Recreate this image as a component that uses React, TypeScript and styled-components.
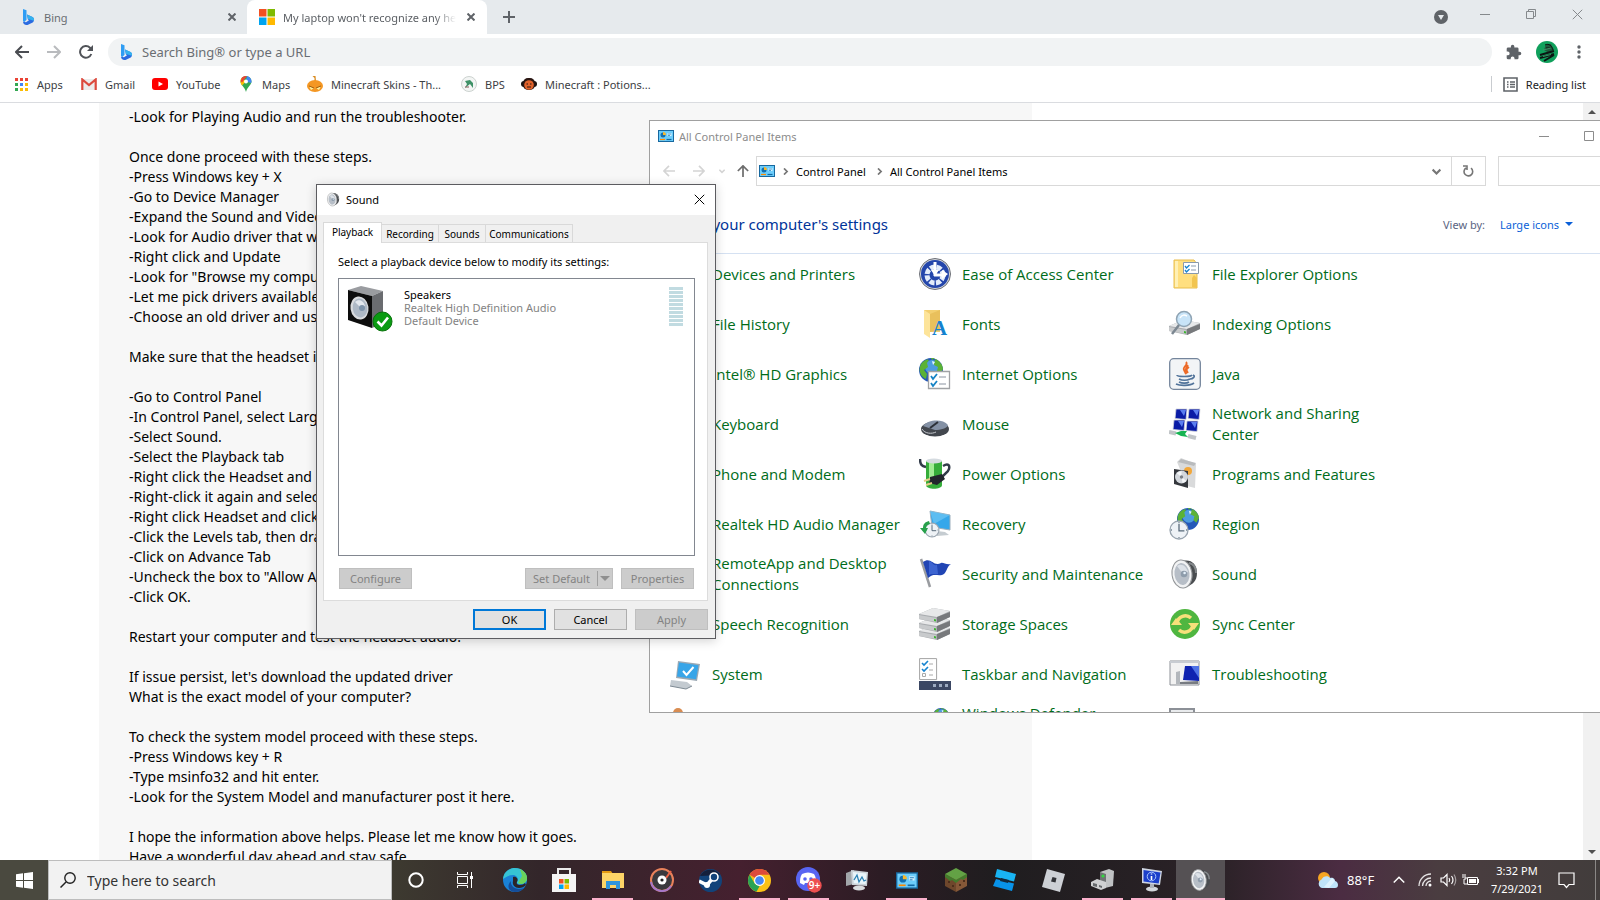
import React from "react";
import styled, { createGlobalStyle, css } from "styled-components";

const Global = createGlobalStyle`
  * { box-sizing: border-box; }
  body { margin: 0; overflow: hidden; font-family: "Noto Sans", "Open Sans", sans-serif; font-size: 11px; color: #000; }
  button, input, select { font: inherit; color: inherit; margin: 0; padding: 0; border: 0; background: none; border-radius: 0; outline: none; }
  a { color: inherit; text-decoration: none; }
  svg { display: block; flex: none; }
  ul { list-style: none; margin: 0; padding: 0; }
`;

/* ---------- Desktop and browser frame ---------- */

const Desktop = styled.div`
  position: relative;
  display: flex;
  flex-direction: column;
  height: 100vh;
  overflow: hidden;
  background: #fff;
`;

const Browser = styled.main`
  flex: 1;
  min-height: 0;
  display: flex;
  flex-direction: column;
`;

const TabStrip = styled.header`
  display: flex;
  flex: none;
  align-items: stretch;
  height: 34px;
  background: #e6eaed;
`;

const BrowserTab = styled.div<{ $active?: boolean }>`
  display: flex;
  align-items: center;
  width: ${(p) => (p.$active ? 240 : 247)}px;
  padding: 0 9px 0 ${(p) => (p.$active ? 12 : 21)}px;
  gap: ${(p) => (p.$active ? 8 : 9)}px;
  color: ${(p) => (p.$active ? "#5b5f64" : "#696d72")};
  ${(p) => p.$active && css`background: #fff; border-radius: 8px 8px 0 0;`}
`;

const TabTitle = styled.span<{ $fade?: boolean }>`
  flex: 1;
  white-space: nowrap;
  overflow: hidden;
  ${(p) => p.$fade && css`mask-image: linear-gradient(90deg, #000 88%, transparent 100%);`}
`;

const IconButton = styled.button<{ $w?: number; $h?: number }>`
  display: flex;
  align-items: center;
  justify-content: center;
  flex: none;
  width: ${(p) => p.$w ?? 16}px;
  height: ${(p) => p.$h ?? 16}px;
`;

const CaptionButtons = styled.div`
  display: flex;
  margin-left: auto;
`;

const Toolbar = styled.nav`
  display: flex;
  flex: none;
  align-items: center;
  height: 36px;
  padding: 0 5px 0 6px;
`;

const NavButtons = styled.div`
  display: flex;
  width: 102px;
`;

const Omnibox = styled.label`
  flex: 1;
  display: flex;
  align-items: center;
  gap: 9px;
  height: 28px;
  padding: 0 11px;
  border-radius: 14px;
  background: #f1f3f4;
`;

const OmniInput = styled.input`
  flex: 1;
  font-size: 13px;
  &::placeholder { color: #6a6e73; opacity: 1; }
`;

const ToolbarEnd = styled.div`
  display: flex;
  align-items: center;
  padding-left: 5px;
`;

const Bookmarks = styled.nav`
  display: flex;
  flex: none;
  align-items: center;
  height: 33px;
  padding: 0 14px 4px 14px;
  border-bottom: 1px solid #dadce0;
  color: #3c4043;
`;

const Bookmark = styled.a<{ $w?: number }>`
  display: flex;
  align-items: center;
  gap: 8px;
  width: ${(p) => (p.$w ? `${p.$w}px` : "auto")};
  white-space: nowrap;
`;

const ReadingList = styled.button`
  display: flex;
  align-items: center;
  gap: 8px;
  height: 16px;
  margin-left: auto;
  padding-left: 11px;
  border-left: 1px solid #c9ccd0;
  color: #202124;
`;

const Viewport = styled.div`
  flex: 1;
  min-height: 0;
  display: flex;
  overflow: hidden;
`;

const PageArea = styled.div`
  flex: 1;
  min-height: 0;
  overflow: hidden;
`;

const Article = styled.article`
  width: min(933px, 100%);
  margin-left: 99px;
  padding: 4px 30px;
  background: #f7f7f7;
  font-size: 14px;
  line-height: 20px;
`;

const Line = styled.p`
  margin: 0;
  min-height: 20px;
  white-space: nowrap;
`;

const ScrollTrack = styled.div`
  display: flex;
  flex-direction: column;
  justify-content: space-between;
  width: 17px;
  background: #f1f1f1;
`;

/* ---------- Control panel window ---------- */

const ControlWindow = styled.section`
  position: absolute;
  left: 649px;
  right: 0;
  top: 120px;
  height: 593px;
  overflow: hidden;
  display: flex;
  flex-direction: column;
  background: #fff;
  border: 1px solid #a0a0a0;
  border-right: 0;
`;

const ControlTitle = styled.header`
  display: flex;
  flex: none;
  align-items: center;
  gap: 5px;
  height: 30px;
  padding: 0 0 0 8px;
  color: #8c8c8c;
`;

const ControlCaption = styled.div`
  display: flex;
  margin-left: auto;
  width: 79px;
  gap: 17px;
`;

const AddressRow = styled.div`
  display: flex;
  flex: none;
  align-items: center;
  height: 40px;
`;

const HistoryButtons = styled.div`
  display: flex;
  width: 106px;
  padding-left: 4px;
`;

const AddressBox = styled.div`
  flex: 1;
  display: flex;
  align-items: center;
  height: 30px;
  margin-right: 12px;
  border: 1px solid #d9d9d9;
`;

const Crumbs = styled.div`
  flex: 1;
  display: flex;
  align-items: center;
  padding-left: 2px;
`;

const Crumb = styled.a<{ $w?: number }>`
  width: ${(p) => (p.$w ? `${p.$w}px` : "auto")};
  white-space: nowrap;
`;

const RefreshCell = styled.div`
  display: flex;
  align-items: center;
  height: 28px;
  border-left: 1px solid #d9d9d9;
`;

const WindowSearch = styled.input`
  width: 102px;
  height: 30px;
  border: 1px solid #d9d9d9;
  border-right: 0;
`;

const HeadingRow = styled.div`
  display: flex;
  flex: none;
  align-items: center;
  justify-content: space-between;
  height: 63px;
  padding: 4px 27px 0 14px;
  border-bottom: 1px solid #d5e1f2;
`;

const Heading = styled.h1`
  margin: 0;
  font-size: 15px;
  font-weight: 400;
  color: #003399;
`;

const ViewBy = styled.label`
  display: flex;
  align-items: center;
  color: #5a6482;
`;

const ViewSelect = styled.select`
  appearance: none;
  width: 65px;
  margin-left: 15px;
  color: #0a5fd8;
`;

const ItemGrid = styled.ul`
  display: grid;
  flex: none;
  grid-template-columns: repeat(3, 250px);
  grid-auto-rows: 50px;
  padding-left: 19px;
  margin-top: -5px;
`;

const ItemCell = styled.li`
  display: flex;
  align-items: center;
`;

const ItemLink = styled.a`
  display: flex;
  align-items: center;
  gap: 11px;
  color: #006c1a;
  font-family: "Open Sans", sans-serif;
  font-size: 15px;
  line-height: 21px;
`;

const ItemLabel = styled.span`
  max-width: 190px;
`;

/* ---------- Sound dialog ---------- */

const Dialog = styled.section`
  position: absolute;
  left: 316px;
  top: 184px;
  width: 400px;
  border: 1px solid #5c5c60;
  background: #f0f0f0;
  box-shadow: 0 2px 10px rgba(0, 0, 0, 0.18);
`;

const DialogTitle = styled.header`
  display: flex;
  align-items: center;
  height: 30px;
  padding: 0 8px 2px 9px;
  gap: 5px;
  background: #fff;
`;

const DialogName = styled.span`
  flex: 1;
`;

const DialogBody = styled.div`
  padding: 7px 7px 8px 6px;
`;

const TabList = styled.div`
  display: flex;
  align-items: flex-end;
  height: 20px;
`;

const DialogTab = styled.button<{ $w: number; $active?: boolean }>`
  width: ${(p) => p.$w}px;
  height: 18px;
  border: 1px solid #d9d9d9;
  border-left-width: 0;
  border-bottom: 0;
  font-size: 10px;
  line-height: 16px;
  white-space: nowrap;
  ${(p) => p.$active && css`
    height: 21px;
    margin-bottom: -1px;
    padding-bottom: 2px;
    border-left-width: 1px;
    background: #fff;
    position: relative;
  `}
`;

const TabPanel = styled.div`
  border: 1px solid #dcdcdc;
  background: #fff;
  height: 359px;
  padding: 11px 12px 11px 14px;
  display: flex;
  flex-direction: column;
`;

const Prompt = styled.p`
  margin: 0;
  line-height: 16px;
`;

const DeviceList = styled.ul`
  flex: 1;
  margin: 8px 0 12px;
  border: 1px solid #828790;
`;

const Device = styled.li`
  display: flex;
  align-items: flex-start;
  padding: 7px 11px 0 9px;
`;

const DeviceText = styled.div`
  flex: 1;
  padding: 2px 0 0 10px;
  line-height: 13px;
  color: #838383;
`;

const DeviceName = styled.div`
  color: #000;
`;

const Meter = styled.div`
  display: grid;
  gap: 1px;
  padding-top: 1px;
`;

const MeterBar = styled.span`
  width: 14px;
  height: 3px;
  background: #c1dbe1;
`;

const ButtonRow = styled.div`
  display: flex;
  gap: 8px;
  justify-content: flex-end;
  padding: 0 1px;
`;

const PushButton = styled.button<{ $primary?: boolean; $start?: boolean }>`
  width: 73px;
  height: 21px;
  border: ${(p) => (p.$primary ? "2px solid #0078d7" : "1px solid #adadad")};
  background: #e1e1e1;
  line-height: 16px;
  ${(p) => p.$start && css`margin-right: auto;`}
  &:disabled { background: #cccccc; border-color: #bfbfbf; color: #838383; }
`;

const SplitButton = styled.button`
  display: flex;
  align-items: center;
  width: 88px;
  height: 21px;
  border: 1px solid #bfbfbf;
  background: #cccccc;
  color: #838383;
`;

const SplitLabel = styled.span`
  flex: 1;
  line-height: 15px;
  border-right: 1px solid #a0a0a0;
`;

const DialogFooter = styled.div`
  padding-top: 8px;
  margin-right: -1px;
`;

/* ---------- Taskbar ---------- */

const Taskbar = styled.footer`
  display: flex;
  flex: none;
  height: 40px;
  background: linear-gradient(90deg, #3d3a30 392px, #33262a 540px, #45202f 740px, #2c1c24 880px, #1f1d1f 1000px, #2b2227 1220px, #4b2c42 1340px, #4a3d40 1440px, #423d3c 100%);
  color: #fff;
`;

const StartButton = styled.button`
  width: 48px;
  display: flex;
  align-items: center;
  justify-content: center;
  background: #4a493f;
`;

const SearchBox = styled.label`
  display: flex;
  align-items: center;
  gap: 11px;
  width: 344px;
  padding-left: 11px;
  background: #f2f2f2;
  border: 1px solid #bdbdbd;
`;

const SearchInput = styled.input`
  flex: 1;
  font-size: 14px;
  &::placeholder { color: #333; opacity: 1; }
`;

const TaskButton = styled.button<{ $w?: number; $open?: boolean; $current?: boolean }>`
  display: flex;
  align-items: center;
  justify-content: center;
  position: relative;
  width: ${(p) => p.$w ?? 49}px;
  background: ${(p) => (p.$current ? "#555154" : "transparent")};
  ${(p) => p.$open && css`
    &::after {
      content: "";
      position: absolute;
      left: ${p.$current ? 0 : 4}px;
      right: ${p.$current ? 0 : 4}px;
      bottom: 0;
      height: 2px;
      background: #fab0cb;
    }
  `}
`;

const Tray = styled.div`
  display: flex;
  align-items: center;
  margin-left: auto;
  padding-right: 4px;
`;

const Weather = styled.button`
  display: flex;
  align-items: center;
  gap: 9px;
  width: 67px;
  font-size: 13px;
`;

const Clock = styled.div`
  width: 68px;
  text-align: center;
  line-height: 18px;
`;

const ShowDesktop = styled.div`
  width: 1px;
  height: 40px;
  margin-left: 14px;
  background: #8b8886;
`;

/* ---------- Icons ---------- */

const Bing = () => (
  <svg width="14" height="16" viewBox="0 0 14 16">
    <path d="M2 0l3.500 1.300v9.500L3.500 13 2 12z" fill="#2f9df4" />
    <path d="M6 5.500l5.500 2.500c2 1.200 2 4 .2 5.600L6.500 16C4 16.200 2 15 2 12.500l3 .8 3-2-1.200-1z" fill="#2b6be0" />
    <path d="M6 5.500l5.500 2.500c1.600 1 1.800 2.500 1.400 3.800L7 10z" fill="#36b2ee" />
  </svg>
);

const MsLogo = () => (
  <svg width="16" height="16" viewBox="0 0 16 16">
    <path fill="#f25022" d="M0 0h7.500v7.500H0z" /><path fill="#7fba00" d="M8.500 0H16v7.500H8.500z" />
    <path fill="#00a4ef" d="M0 8.500h7.500V16H0z" /><path fill="#ffb900" d="M8.500 8.500H16V16H8.500z" />
  </svg>
);

const Cross = ({ s = 8, c = "#5f6368", w = 2 }: { s?: number; c?: string; w?: number }) => (
  <svg width={s} height={s} viewBox="0 0 10 10"><path d="M.7.700l8.600 8.600M9.300.700L.700 9.300" stroke={c} strokeWidth={w * 10 / s} /></svg>
);

const Plus = () => <svg width="12" height="12"><path d="M6 0v12M0 6h12" stroke="#5f6368" strokeWidth="2" /></svg>;
const Minimize = ({ c = "#85898c" }) => <svg width="10" height="10"><path d="M0 5.500h10" stroke={c} /></svg>;
const Maximize = () => <svg width="10" height="10"><path d="M.5.500h9v9h-9z" fill="none" stroke="#8c8c8c" /></svg>;
const Restore = () => <svg width="10" height="10"><path d="M.5 2.500h7v7h-7zM2.500 2.500v-2h7v7h-2" fill="none" stroke="#85898c" /></svg>;
const MediaChevron = () => <svg width="14" height="14"><circle cx="7" cy="7" r="7" fill="#5f6368" /><path d="M4 5h6L7 10z" fill="#e6eaed" /></svg>;

const Arrow = ({ dir = 0, c = "#4a4d52", s = 14, w = 2 }) => (
  <svg width={s} height={s} viewBox="0 0 14 14"><path transform={`rotate(${dir} 7 7)`} d="M14 7H1.500M7 1L1 7l6 6" fill="none" stroke={c} strokeWidth={w} /></svg>
);
const Chevron = ({ dir = 0, c = "#767676", s = 8, w = 2 }) => (
  <svg width={s} height={s} viewBox="0 0 8 8"><path transform={`rotate(${dir} 4 4)`} d="M.5 2.300L4 5.800l3.500-3.500" fill="none" stroke={c} strokeWidth={w} /></svg>
);
const Triangle = ({ up = false, c = "#505050", s = 8 }) => (
  <svg width={s} height={s / 2} viewBox="0 0 8 4"><path d={up ? "M0 4L4 0l4 4z" : "M0 0h8L4 4z"} fill={c} /></svg>
);
const Reload = () => (
  <svg width="14" height="14" viewBox="0 0 14 14"><path d="M12.300 9A5.800 5.800 0 1 1 11 2.800L12.500 4.500" fill="none" stroke="#505358" strokeWidth="2" /><path d="M14 0v6H8z" fill="#505358" /></svg>
);
const SmallRefresh = () => (
  <svg width="11" height="12" viewBox="0 0 11 12"><path d="M8 3.200A4.300 4.300 0 1 1 3 3M0 1h4v4" fill="none" stroke="#767676" strokeWidth="1.600" /></svg>
);
const Puzzle = () => (
  <svg width="16" height="16" viewBox="1 0 23 23" fill="#5f6368"><path d="M20.500 11H19V7a2 2 0 0 0-2-2h-4V3.500a2.500 2.500 0 0 0-5 0V5H4a2 2 0 0 0-2 2v3.800h1.500a2.700 2.700 0 0 1 0 5.400H2V20a2 2 0 0 0 2 2h3.800v-1.500a2.700 2.700 0 0 1 5.400 0V22H17a2 2 0 0 0 2-2v-4h1.500a2.500 2.500 0 0 0 0-5z" /></svg>
);
const Avatar = () => (
  <svg width="22" height="22" viewBox="0 0 22 22">
    <circle cx="11" cy="11" r="11" fill="#10a05c" /><path d="M8 9L10 3l5 0 3 6-5 3z" fill="#1c5a3c" />
    <path d="M4 14l14-4M4 17l14-4M8 20l10-6" stroke="#0b1512" strokeWidth="2" /><path d="M9 4c4-2 7 1 8 5M10 7l5 0" stroke="#0b1512" fill="none" /><path d="M7 9l8-2M7 15.500l8-2" stroke="#3f8d66" />
  </svg>
);
const Dots = () => <svg width="4" height="14"><g fill="#5f6368"><circle cx="2" cy="2" r="1.700" /><circle cx="2" cy="7" r="1.700" /><circle cx="2" cy="12" r="1.700" /></g></svg>;

const AppsGrid = () => {
  const cs = ["#ea4335", "#ea4335", "#ea4335", "#34a853", "#4285f4", "#fbbc04", "#34a853", "#fbbc04", "#fbbc04"];
  return <svg width="15" height="15">{cs.map((c, i) => <rect key={i} x={1 + (i % 3) * 5} y={1 + Math.floor(i / 3) * 5} width="3" height="3" fill={c} />)}</svg>;
};
const Gmail = () => <svg width="16" height="12" viewBox="0 0 16 12"><path d="M1 1h14v11H1z" fill="#ececec" /><path d="M1.300 12V1.500L8 7l6.700-5.500V12" fill="none" stroke="#dc4a3e" strokeWidth="2.200" /></svg>;
const YouTube = () => <svg width="16" height="12"><rect width="16" height="12" rx="3" fill="#f00" /><path d="M6.500 3.500v5L11 6z" fill="#fff" /></svg>;
const Pin = () => (
  <svg width="16" height="16" viewBox="0 0 16 16"><path d="M8 0a5.500 5.500 0 0 1 5.500 5.500C13.500 9 9.500 10.500 8 16 6.500 10.500 2.500 9 2.500 5.500A5.500 5.500 0 0 1 8 0z" fill="#34a853" /><path d="M2.500 5.500A5.500 5.500 0 0 1 4 1.600L8 5.500 4 9.500C3 8.300 2.500 7 2.500 5.500z" fill="#fbbc04" /><path d="M4 1.600A5.500 5.500 0 0 1 9 .100L4 6.500 2.600 5z" fill="#ea4335" /><path d="M9 .100c2.500.5 4.500 2.700 4.500 5.400l-.3 1.500L8 5.500z" fill="#4285f4" /><circle cx="8" cy="5.500" r="2" fill="#fff" /></svg>
);
const Pumpkin = () => (
  <svg width="16" height="16" viewBox="0 0 16 16"><path d="M5.500 0h3l.5 5H7.500V2z" fill="#d98a1e" /><ellipse cx="8" cy="10" rx="8" ry="6" fill="#f49723" /><path d="M2 10l5 2-3 2zM14 10l-5 2 3 2z" fill="#fff3a0" /><path d="M2 10l5 2M14 10l-5 2" stroke="#a05a08" /></svg>
);
const Bps = () => <svg width="16" height="16"><circle cx="8" cy="8" r="7.500" fill="#f3f5f4" stroke="#ccd2cf" /><path d="M4 5l5-1 3 3v5l-3-4-5 4 2-4z" fill="#3e9167" /><path d="M4 11h4" stroke="#8a5a5a" /></svg>;
const Potion = () => <svg width="16" height="14"><rect y="4" width="16" height="6" rx="3" fill="#1b1412" /><rect x="2" y="1" width="12" height="12" rx="5" fill="#2a1612" /><circle cx="8" cy="8" r="4.800" fill="#e2632b" /><path d="M5.500 7h1.500M9 7h1.500M6 10h4" stroke="#2b1612" /></svg>;
const ListIcon = () => <svg width="15" height="15"><path d="M1 1h13v13H1z" fill="none" stroke="#5f6368" strokeWidth="1.600" /><path d="M4 5h1.500M7 5h5M4 7.500h1.500M7 7.500h5M4 10h1.500M7 10h5" stroke="#5f6368" strokeWidth="1.400" /></svg>;

const PanelIcon = ({ w = 16, h = 12 }) => (
  <svg width={w} height={h} viewBox="0 0 16 12"><rect width="16" height="12" fill="#17689f" /><rect x="1" y="1" width="14" height="10" fill="#6ccdfb" /><circle cx="5" cy="5" r="2.500" fill="#136fae" /><path d="M5 5V2a3 3 0 0 1 3 3z" fill="#f6b62b" /><path d="M9.500 3h4v3h-4z" fill="#d9f2ff" /><path d="M10 4h3M10 5.500h2" stroke="#1677b8" strokeWidth=".7" /><path d="M2 9.500h5" stroke="#ff8a00" strokeWidth="1.200" /><path d="M8.500 9.500h5" stroke="#126aa5" strokeWidth="1.200" /></svg>
);

const Cone = ({ s = 32 }) => (
  <svg width={s} height={s} viewBox="0 0 32 32">
    <path d="M14 3c8-2 14 3 14 12s-5 11-10 14z" fill="#4a4d50" /><path d="M20 5c5 1 7 5 7 10" stroke="#85898c" strokeWidth="2" fill="none" />
    <ellipse cx="13" cy="16" rx="10" ry="14" transform="rotate(-7 13 16)" fill="#f2f3f4" stroke="#94979a" />
    <ellipse cx="13" cy="16" rx="7.500" ry="11" transform="rotate(-7 13 16)" fill="#b7bec7" /><path d="M8 8c5-3 9 0 11 6l-5 2z" fill="#dde2e8" /><circle cx="15" cy="16" r="3.300" fill="#8e9cab" /><circle cx="15.600" cy="15" r="1.300" fill="#e7f2fb" />
  </svg>
);

const SpeakerBox = () => (
  <svg width="46" height="46" viewBox="0 0 46 46">
    <path d="M0 4L13 0l22 5-11 5z" fill="#9a9ca0" /><path d="M24 10l11-5v32l-11 5z" fill="#6a6c70" /><path d="M0 4l24 6v32L0 34z" fill="#0d0d0d" />
    <ellipse cx="11.500" cy="22" rx="9" ry="11.500" transform="rotate(-8 11.500 22)" fill="#d9dbde" /><ellipse cx="12" cy="22" rx="7.300" ry="9.500" transform="rotate(-8 12 22)" fill="#aeb9c6" /><path d="M7 16c4-4 9-1 10 4l-4 2z" fill="#e3e8ee" /><circle cx="14" cy="22" r="3" fill="#7d93aa" />
    <circle cx="34.500" cy="35.500" r="9.500" fill="#0a9b12" stroke="#067109" /><path d="M29.500 35.500l4 4 6.500-8" fill="none" stroke="#fff" strokeWidth="2.600" />
  </svg>
);

const Svg32 = ({ children }: { children: React.ReactNode }) => <svg width="32" height="32" viewBox="0 0 32 32">{children}</svg>;
const Globe = ({ x = 12, y = 12, r = 12 }) => (
  <g transform={`translate(${x - r} ${y - r}) scale(${r / 12})`}><circle cx="12" cy="12" r="12" fill="#2458b8" /><circle cx="13" cy="9" r="7" fill="#57aee8" opacity=".8" /><path d="M2 6c4-5 7-5 8-4L8 5l1 4-4 3 3 4-1 5C1 18-1 12 2 6zM16 1c4 1 8 6 8 10l-3 5-3-3 1-4-4-2zM12 0h4l-3 2z" fill="#5bb236" /><path d="M13 3l3 1-2 3z" fill="#e4f6ff" /></g>
);
const Checklist = () => <g><path d="M9.500 13.500h21v17h-21z" fill="#fff" stroke="#a0a2a5" strokeWidth="1.300" /><path d="M12 18l2 3 4-5M12 25l2 3 4-5" fill="none" stroke="#1583c5" strokeWidth="1.800" /><path d="M20 19h7M20 26h7" stroke="#8a93a0" /></g>;
const Monitor = ({ x = 0, y = 0 }) => <g transform={`translate(${x} ${y})`}><path d="M1 0h11l-1 10.500L0 9.500z" fill="#0a1ca6" stroke="#d3d6dc" strokeWidth=".8" /><path d="M5 1h6l-2 6z" fill="#5b7ef0" /></g>;
const Drive = ({ y = 0 }) => <g transform={`translate(0 ${y})`}><path d="M0 6L14 0l17 3v6l-13 6L0 11z" fill="#a9acaf" /><path d="M0 6L14 0l17 3-13 6z" fill="#e7e8e9" /><path d="M0 7l17 3v4L0 11z" fill="#c8cacc" /><path d="M18 9l13-5v5l-13 6z" fill="#77797c" /><path d="M15 11l2 .5v2l-2-.4z" fill="#3db532" /></g>;
const Clocky = ({ x = 10, y = 22, r = 9 }) => <g transform={`translate(${x} ${y}) scale(${r / 10})`}><circle r="10" fill="#eef2f6" stroke="#9aa5b0" strokeWidth="1.500" /><path d="M0-7V1h6M0-9v1M0 8v1M-9 0h1M8 0h1" fill="none" stroke="#566878" strokeWidth="1.400" /></g>;

const art: Record<string, React.ReactNode> = {
  blank: null,
  system: <><path d="M9 3l22 3-3 17-21-3z" fill="#9ba8b3" /><path d="M10 4.500l19.500 2.700-2.500 14L8 18.500z" fill="#38a5e8" /><path d="M14 13l3.500 4 7-8" fill="none" stroke="#fff" strokeWidth="2" /><path d="M2 22l16 2 5 4-6 3L1 28z" fill="#c3cad0" /><path d="M1 28l16 3 6-3" fill="none" stroke="#7e8a94" /></>,
  user: <><circle cx="9" cy="5" r="5" fill="#d98d52" /><path d="M3 12h12v10H3z" fill="#3b8bd0" /></>,
  access: <><circle cx="16" cy="16" r="15.500" fill="#d6d8dc" stroke="#6c6f76" /><circle cx="16" cy="16" r="14" fill="#2446ab" /><circle cx="16" cy="17" r="8" fill="none" stroke="#e3ecfa" strokeWidth="5" strokeDasharray="5 1.500" /><path d="M16 4v14M15 17h12" stroke="#fff" strokeWidth="3" /><path d="M12 12h8l-4 6zM23 12l6 4-6 5z" fill="#fff" /></>,
  fonts: <><path d="M5 2h16v22H5z" fill="#f3cf70" /><path d="M5 2l6 4v24l-6-4z" fill="#fde49a" /><path d="M11 6l10-4v20l-10 2z" fill="#e9c05c" /><text x="13" y="27" fontFamily="Liberation Serif" fontWeight="700" fontSize="21" fill="#1482cf">A</text></>,
  internet: <><Globe /><Checklist /></>,
  mouse: <><ellipse cx="16" cy="21" rx="14" ry="7.500" fill="#43474e" /><path d="M4 18c6-7 20-7 25-1 0 3-8 5-13 5z" fill="#8491a5" /><path d="M11 20l8-6" stroke="#2c3138" strokeWidth="2" /><path d="M3 21c3 5 10 5 14 3" stroke="#c5c8cd" fill="none" /></>,
  power: <><path d="M1 1c0 6 2 7 6 8M24 8c5-3 7-1 6 3s-6 5-7 9" fill="none" stroke="#323b49" strokeWidth="2.500" /><path d="M7 3h16v24c0 5-16 5-16 0z" fill="#35ad3a" /><path d="M10 5h5v20h-5z" fill="#a0ec94" /><ellipse cx="15" cy="3" rx="8" ry="2.600" fill="#d5dbe0" /><path d="M11 19l12-3 3 5-8 6-8-2z" fill="#22262c" /><path d="M11 21l-6 2M13 25l-6 2" stroke="#e5cd88" strokeWidth="2" /></>,
  recovery: <><path d="M11 3l20 4v15l-18-3z" fill="#35a7ea" stroke="#9db0bd" /><path d="M11 3l20 4L15 16z" fill="#6fc6f4" opacity=".7" /><path d="M18 23l8 1 4 3-12 1z" fill="#c5ccd1" /><Clocky x={13} y={22} r={7} /><path d="M10 13c-4 1-6 3-6 7H1l5 6 3-6H7c0-2 1-3 4-4z" fill="#27a04b" /></>,
  flag: <><path d="M2 1l9 28" stroke="#9a9ca0" strokeWidth="2.500" /><path d="M4 4c8-6 10 5 18 1 2-1 5 2 10 1-5 3-4 10-9 11-6 1-8-2-14 3z" fill="#2145b4" /><path d="M10 3c4 1 4 5 8 4l1 9c-4 1-6-1-9 1z" fill="#4a72dd" opacity=".7" /></>,
  storage: <><Drive y={17} /><Drive y={9} /><Drive y={0} /></>,
  taskbar: <><path d="M.6.600h17v21h-17z" fill="#fff" stroke="#a4a4a4" /><path d="M3 5l2 2 4-4M3 11l2 2 4-4" fill="none" stroke="#1683cf" strokeWidth="1.600" /><path d="M10 6h4M10 12h4M10 17h4M3.500 15.500h3v3h-3z" fill="none" stroke="#aaa" /><path d="M0 23h32v9H0z" fill="#3b4763" /><path d="M14 26h3v3h-3zM20 26h3v3h-3zM26 26h3v3h-3z" fill="#9caac0" /></>,
  defender: <><Globe x={22} y={8} r={8} /><path d="M2 14h18v12H2z" fill="#a8482e" /></>,
  explorer: <><path d="M5 2h20l3 4v24H5z" fill="#ffdf7f" stroke="#e8bd4d" /><path d="M6 3h3v26H6z" fill="#fff0b4" /><path d="M14.500 4.500h15v11h-15z" fill="#fff" stroke="#8999ac" /><path d="M16 8l1.500 2 3-3M16 12l1.500 2 3-3" fill="none" stroke="#1683cf" strokeWidth="1.300" /><path d="M22 8h5M22 12h5" stroke="#8999ac" /><path d="M23 29V20l2-3 3 3v10z" fill="#f2c550" /></>,
  indexing: <><g transform="translate(0 12)"><Drive /></g><circle cx="15" cy="11" r="7.500" fill="#c8e4f8" stroke="#8fa4b4" strokeWidth="1.500" /><path d="M11 10c2-4 5-3 7-2" stroke="#fff" fill="none" strokeWidth="1.500" /><path d="M10 17L3 26" stroke="#7c8791" strokeWidth="2.500" /></>,
  java: <><rect x=".7" y=".7" width="30.600" height="30.600" rx="4" fill="#f2f4f6" stroke="#74859c" strokeWidth="1.300" /><path d="M17 4c3 3-4 5-2 8l2 4c0-4-2-3 2-9M20 9c-3 2-3 3-1 6" fill="none" stroke="#ec6a28" strokeWidth="1.800" /><path d="M8 17c0 2 14 2 15 0M10 21c3 1.500 8 1.500 11 0M24 17c3 1 0 4-3 4M7 26c4 2 14 2 18-1M10 24c3 1.500 8 1.500 10 0" fill="none" stroke="#51739a" strokeWidth="1.700" /></>,
  network: <><Monitor x={6} y={1} /><Monitor x={19} y={1} /><Monitor x={4} y={12} /><Monitor x={17} y={13} /><path d="M0 24l7 1.500M19 28l8 2" stroke="#c0c4c7" strokeWidth="4" /><path d="M6 25l6-2 6 0-2 3 3 3-7-1z" fill="#16b452" /></>,
  programs: <><path d="M8 4l4-4 15 6-1 24-8-2z" fill="#d9dadb" /><path d="M12 1l15 4-2 3-16-4z" fill="#b9bbbd" /><circle cx="19" cy="13" r="4" fill="#f2a73a" /><path d="M5 11l14 2v17L5 26z" fill="#34373c" /><circle cx="12.500" cy="19" r="6.500" fill="#d3d7dc" /><path d="M12.500 19l-5-4 5-2zM12.500 19l5 4-4 2z" fill="#f4f6f8" /><circle cx="12.500" cy="19" r="1.700" fill="#7a7f86" /></>,
  region: <><Globe x={19} y={11} r={11} /><Clocky x={10} y={22} r={9} /></>,
  sync: <><circle cx="16" cy="16" r="15" fill="#4fb640" /><path d="M8 15a8.500 8.500 0 0 1 14-5M24 17a8.500 8.500 0 0 1-14 5" fill="none" stroke="#f7e07b" strokeWidth="3.500" /><path d="M19 15h11l-5 7zM13 17H2l5-7z" fill="#f7e07b" /></>,
  trouble: <><path d="M1 3h29v24H1z" fill="#f2f2f2" stroke="#8c9097" /><path d="M1 3h29v2H1z" fill="#c8ccd2" /><path d="M7 14l4-1v13H7z" fill="#b3b7bc" /><path d="M16 8h14v15l-16-1z" fill="#0f23b0" /><path d="M22 8h8v12z" fill="#4f73e6" /><path d="M11 24l18-1v3H11z" fill="#777b81" /></>,
  window: <path d="M1 1h24v20H1z" fill="#e9ebed" stroke="#8c9097" strokeWidth="2" />,
};

const ItemIcon = ({ name }: { name: string }) => (name === "sound" ? <Cone /> : <Svg32>{art[name]}</Svg32>);

const StartLogo = () => <svg width="17" height="17" viewBox="0 0 17 17" fill="#fff"><path d="M0 2.300l7-1v6.700H0zM8 1.200L17 0v8H8zM0 9h7v6.700l-7-1zM8 9h9v8l-9-1.200z" /></svg>;
const Lens = () => <svg width="16" height="16"><circle cx="10" cy="6" r="5.200" fill="none" stroke="#222" strokeWidth="1.400" /><path d="M6 10L.500 15.500" stroke="#222" strokeWidth="1.500" /></svg>;
const TaskView = () => <svg width="17" height="16" fill="none" stroke="#fff"><path d="M.5 4.500h10v7H.500zM.5 0v2.500h10V0M.5 16v-2.500h10V16M14.500 0v16" /><path d="M13 4h3v3h-3z" fill="#fff" stroke="none" /></svg>;
const Edge = () => <svg width="24" height="24" viewBox="0 0 24 24"><circle cx="12" cy="12" r="12" fill="#1a82d7" /><path d="M0 11C1 3 7 0 12 0c7 0 12 5 12 10 0 4-3 6-7 6-3 0-4-2-3-3 2-3-1-6-4-6-5 0-8 3-10 4z" fill="#36c3d4" /><path d="M17 1c4 2 7 5 7 9 0 4-3 6-7 6l-2-1 4-7z" fill="#6ad45b" /><path d="M8 13c-1 5 4 8 8 8 3 0 4-1 6-2-2 3-6 5-10 5C6 24 3 18 8 13z" fill="#154d99" /><path d="M10 9c3-1 6 2 4 5-1 2 1 3 3 3 2 0 4-1 5-2l1 2c-2 2-4 3-7 3-4 0-7-3-6-7z" fill="#2c2328" /></svg>;
const Store = () => <svg width="24" height="24"><path d="M6 7V1h12v6" fill="none" stroke="#e9e9e9" strokeWidth="2" /><path d="M0 6h24v18H0z" fill="#f4f4f4" /><path d="M7 11h4.500v4.500H7z" fill="#f25022" /><path d="M12.500 11H17v4.500h-4.500z" fill="#7fba00" /><path d="M7 16.500h4.500V21H7z" fill="#00a4ef" /><path d="M12.500 16.500H17V21h-4.500z" fill="#ffb900" /></svg>;
const Folder = () => <svg width="22" height="20"><path d="M0 1h9l2 3H0z" fill="#e59b13" /><path d="M0 3h22v15H0z" fill="#fdd467" /><path d="M4 19v-8h14v8h-4v-4H8v4z" fill="#2f95dc" /></svg>;
const Groove = () => <svg width="24" height="24"><circle cx="12" cy="12" r="11" fill="#3a393d" stroke="#e9825b" strokeWidth="2" /><path d="M1 14a11 11 0 0 0 20 4" fill="none" stroke="#a678c8" strokeWidth="2" /><path d="M16 10l5-7" stroke="#ed6548" strokeWidth="2" /><circle cx="12" cy="12" r="4.500" fill="#fff" /><circle cx="12" cy="12" r="1.600" fill="#222" /></svg>;
const Steam = () => <svg width="23" height="23"><circle cx="11.500" cy="11.500" r="11.500" fill="#12437a" /><path d="M1 7a11.500 11.500 0 0 1 20 -1z" fill="#15203c" /><path d="M0 12l8 4 6-7" fill="none" stroke="#fff" strokeWidth="3.500" /><circle cx="15" cy="8" r="4" fill="#12437a" stroke="#fff" strokeWidth="1.600" /><circle cx="8" cy="16" r="3" fill="#fff" /></svg>;
const Chrome = () => <svg width="23" height="23" viewBox="0 0 24 24"><circle cx="12" cy="12" r="12" fill="#fbc116" /><path d="M12 12L1.600 6A12 12 0 0 1 22.400 6H12z" fill="#de4b3b" /><path d="M1.600 6L7 15l5 3-3 5.600A12 12 0 0 1 1.600 6z" fill="#2aa355" /><circle cx="12" cy="12" r="5.700" fill="#fff" /><circle cx="12" cy="12" r="4.500" fill="#4587f3" /></svg>;
const Discord = () => <svg width="26" height="26"><circle cx="12" cy="12" r="12" fill="#5865f2" /><path d="M6 7c4-2 8-2 12 0 2 3 2 6 2 9l-4 2-1-2H9l-1 2-4-2c0-3 0-6 2-9z" fill="#fff" /><circle cx="9" cy="12" r="1.800" fill="#5865f2" /><circle cx="15" cy="12" r="1.800" fill="#5865f2" /><circle cx="18.500" cy="18.500" r="7.200" fill="#ed4f50" /><text x="18.500" y="22" textAnchor="middle" fontSize="10" fontWeight="600" fill="#fff">9+</text></svg>;
const Perf = () => <svg width="24" height="24"><path d="M0 5l8-3v14l-8 2z" fill="#a2a6aa" /><path d="M5 2l17 2-1 14-15-1z" fill="#ccd3d8" /><path d="M7 4l13.500 1.500-.8 10.500-12-.8z" fill="#eaf6fb" /><path d="M8 12l3-5 2 7 3-5 2 4 2-1" fill="none" stroke="#2c82b4" strokeWidth="1.300" /><ellipse cx="13" cy="20" rx="6" ry="2.500" fill="#dadcde" /></svg>;
const Grass = () => <svg width="24" height="24"><path d="M1 6l11 5v13L1 18z" fill="#6e472c" /><path d="M23 6l-11 5v13l11-6z" fill="#855838" /><path d="M12 0l11 6-11 6L1 6z" fill="#63a245" /><path d="M1 6l11 6 11-6v3l-4 3-2-1-5 4-4-3-2 1-5-4z" fill="#437b2c" /><path d="M4 13h2v2H4zM8 17h2v2H8zM15 16h2v2h-2zM19 12h2v2h-2z" fill="#4d2e1b" /></svg>;
const Studio = () => <svg width="24" height="24"><path d="M4 1l19 5-2 7.500L2 9z" fill="#19b5f4" /><path d="M3 11l18 4.500-2 7.500L0 18z" fill="#0893ea" /><path d="M8 10l8 2-1 3-8-2z" fill="#12283c" /></svg>;
const Roblox = () => <svg width="24" height="24"><path d="M5 1l18 5-5 18L0 19z" fill="#cdd0d5" /><path d="M10.500 9l4 1-1 4.500-4.500-1z" fill="#303136" /></svg>;
const Device3d = () => <svg width="24" height="24"><path d="M9 4l9-3 5 2-1 15-8 2z" fill="#c0c2c4" /><path d="M9 4l6 2v13l-6-2z" fill="#707375" /><path d="M0 14l6-3 9 3v6l-5 2-10-4z" fill="#cfd0d2" /><path d="M2 15l4 1v3l-4-1zM8 17l3 1v2l-3-1z" fill="#66696c" /><circle cx="12" cy="8" r="1.600" fill="#32d940" /></svg>;
const SysInfo = () => <svg width="24" height="24"><path d="M2 0l20 3-2 14L2 15z" fill="#ced5e2" /><path d="M3.500 2l17 2.500-1.800 11L3.500 13.500z" fill="#1b3fcb" /><circle cx="11.500" cy="8.500" r="4.300" fill="none" stroke="#a8c6ff" /><path d="M11.500 5.500v1M11.500 8v4" stroke="#fff" strokeWidth="1.600" /><ellipse cx="12" cy="21" rx="6" ry="2.500" fill="#d3d7dc" /><path d="M10 16h4v4h-4z" fill="#aeb3ba" /></svg>;
const WeatherIcon = () => <svg width="20" height="16"><circle cx="6" cy="6" r="6" fill="#f6a623" /><path d="M4 16a4.500 4.500 0 0 1-.5-8.500C5 4 10 3 12 6c4-1 5 2 5 3 4 1 4 7 0 7z" fill="#bfe4fa" /><path d="M6 15l8-9 3 3-6 7z" fill="#e6f6ff" opacity=".8" /></svg>;
const Wifi = () => <svg width="14" height="14" fill="none" stroke="#fff" strokeWidth="1.300"><path d="M1 13A12 12 0 0 1 13 1M4.500 13A8.500 8.500 0 0 1 13 5M8 13a5 5 0 0 1 5-5" opacity=".85" /><circle cx="12" cy="12" r="1.500" fill="#fff" stroke="none" /></svg>;
const Volume = () => <svg width="17" height="14" fill="none" stroke="#fff" strokeWidth="1.200"><path d="M1 5h2.500L7 1.500v11L3.500 9H1zM9 5q1.500 2 0 4M11.500 3q3 4 0 8" /><path d="M14 1.500q3.500 5.500 0 11" opacity=".5" /></svg>;
const Battery = () => <svg width="18" height="12" fill="none" stroke="#fff"><path d="M5.500 3.500h10v7h-10zM16.500 5v4M3 0v2M1 0v2M0 3h4v2H2v5h3" /><path d="M7 5h7v4H7z" fill="#fff" stroke="none" /></svg>;
const Notify = () => <svg width="17" height="17" fill="none" stroke="#fff" strokeWidth="1.200"><path d="M1 1h15v11.500h-5l-2.500 3-2.500-3H1z" /></svg>;

/* ---------- Content ---------- */

const article = [
  "-Look for Playing Audio and run the troubleshooter.", "", "Once done proceed with these steps.", "-Press Windows key + X", "-Go to Device Manager",
  "-Expand the Sound and Video", "-Look for Audio driver that w", "-Right click and Update", "-Look for \"Browse my computer", "-Let me pick drivers available",
  "-Choose an old driver and use", "", "Make sure that the headset is", "", "-Go to Control Panel", "-In Control Panel, select Large", "-Select Sound.", "-Select the Playback tab",
  "-Right click the Headset and", "-Right-click it again and select", "-Right click Headset and click", "-Click the Levels tab, then drag", "-Click on Advance Tab", "-Uncheck the box to \"Allow A", "-Click OK.", "",
  "Restart your computer and test the headset audio.", "", "If issue persist, let's download the updated driver", "What is the exact model of your computer?", "",
  "To check the system model proceed with these steps.", "-Press Windows key + R", "-Type msinfo32 and hit enter.", "-Look for the System Model and manufacturer post it here.", "",
  "I hope the information above helps. Please let me know how it goes.", "Have a wonderful day ahead and stay safe.",
];

const items: [string, string][] = [
  ["blank", "Devices and Printers"], ["access", "Ease of Access Center"], ["explorer", "File Explorer Options"],
  ["blank", "File History"], ["fonts", "Fonts"], ["indexing", "Indexing Options"],
  ["blank", "Intel® HD Graphics"], ["internet", "Internet Options"], ["java", "Java"],
  ["blank", "Keyboard"], ["mouse", "Mouse"], ["network", "Network and Sharing Center"],
  ["blank", "Phone and Modem"], ["power", "Power Options"], ["programs", "Programs and Features"],
  ["blank", "Realtek HD Audio Manager"], ["recovery", "Recovery"], ["region", "Region"],
  ["blank", "RemoteApp and Desktop Connections"], ["flag", "Security and Maintenance"], ["sound", "Sound"],
  ["blank", "Speech Recognition"], ["storage", "Storage Spaces"], ["sync", "Sync Center"],
  ["system", "System"], ["taskbar", "Taskbar and Navigation"], ["trouble", "Troubleshooting"],
  ["user", ""], ["defender", "Windows Defender Firewall"], ["window", ""],
];

const bookmarks: [string, React.ReactNode, number][] = [
  ["Apps", <AppsGrid />, 67], ["Gmail", <Gmail />, 71], ["YouTube", <YouTube />, 86], ["Maps", <Pin />, 69],
  ["Minecraft Skins - Th...", <Pumpkin />, 154], ["BPS", <Bps />, 60], ["Minecraft : Potions...", <Potion />, 140],
];

const tasks: { name: string; icon: React.ReactNode; open?: boolean; current?: boolean }[] = [
  { name: "Edge", icon: <Edge /> }, { name: "Store", icon: <Store /> }, { name: "File Explorer", icon: <Folder />, open: true },
  { name: "Groove", icon: <Groove /> }, { name: "Steam", icon: <Steam /> }, { name: "Chrome", icon: <Chrome />, open: true },
  { name: "Discord", icon: <Discord />, open: true }, { name: "Performance", icon: <Perf /> },
  { name: "Control Panel", icon: <PanelIcon w={22} h={17} />, open: true }, { name: "Minecraft", icon: <Grass /> },
  { name: "Studio", icon: <Studio /> }, { name: "Roblox", icon: <Roblox /> }, { name: "Devices", icon: <Device3d />, open: true },
  { name: "System Information", icon: <SysInfo />, open: true }, { name: "Sound", icon: <Cone s={24} />, open: true, current: true },
];

function BrowserWindow() {
  return (
    <Browser>
      <TabStrip>
        <BrowserTab><Bing /><TabTitle>Bing</TabTitle><IconButton aria-label="Close tab" $w={12}><Cross /></IconButton></BrowserTab>
        <BrowserTab $active><MsLogo /><TabTitle $fade>My laptop won't recognize any headset</TabTitle><IconButton aria-label="Close tab" $w={14}><Cross /></IconButton></BrowserTab>
        <IconButton aria-label="New tab" $w={44} $h={33}><Plus /></IconButton>
        <CaptionButtons>
          <IconButton aria-label="Tab search" $w={42} $h={34}><MediaChevron /></IconButton>
          <IconButton aria-label="Minimize" $w={46} $h={28}><Minimize /></IconButton>
          <IconButton aria-label="Restore" $w={46} $h={28}><Restore /></IconButton>
          <IconButton aria-label="Close" $w={46} $h={28}><Cross s={11} c="#85898c" w={1} /></IconButton>
        </CaptionButtons>
      </TabStrip>
      <Toolbar>
        <NavButtons>
          <IconButton aria-label="Back" $w={32}><Arrow /></IconButton>
          <IconButton aria-label="Forward" $w={32}><Arrow dir={180} c="#b9bbbe" /></IconButton>
          <IconButton aria-label="Reload" $w={32}><Reload /></IconButton>
        </NavButtons>
        <Omnibox><Bing /><OmniInput aria-label="Address" placeholder="Search Bing® or type a URL" /></Omnibox>
        <ToolbarEnd>
          <IconButton aria-label="Extensions" $w={34}><Puzzle /></IconButton>
          <IconButton aria-label="Profile" $w={32} $h={22}><Avatar /></IconButton>
          <IconButton aria-label="Menu" $w={32}><Dots /></IconButton>
        </ToolbarEnd>
      </Toolbar>
      <Bookmarks>
        {bookmarks.map(([name, icon, w]) => <Bookmark key={name} href="#" $w={w}>{icon}{name}</Bookmark>)}
        <ReadingList><ListIcon />Reading list</ReadingList>
      </Bookmarks>
      <Viewport>
        <PageArea><Article>{article.map((t, i) => <Line key={i}>{t}</Line>)}</Article></PageArea>
        <ScrollTrack>
          <IconButton aria-label="Scroll up" $w={17} $h={17}><Triangle up /></IconButton>
          <IconButton aria-label="Scroll down" $w={17} $h={17}><Triangle /></IconButton>
        </ScrollTrack>
      </Viewport>
    </Browser>
  );
}

function ControlPanel() {
  return (
    <ControlWindow>
      <ControlTitle>
        <PanelIcon />All Control Panel Items
        <ControlCaption>
          <IconButton aria-label="Minimize" $w={46}><Minimize c="#8c8c8c" /></IconButton>
          <IconButton aria-label="Maximize" $w={10}><Maximize /></IconButton>
        </ControlCaption>
      </ControlTitle>
      <AddressRow>
        <HistoryButtons>
          <IconButton aria-label="Back" $w={30}><Arrow s={12} c="#d4d4d4" /></IconButton>
          <IconButton aria-label="Forward" $w={30}><Arrow s={12} dir={180} c="#d4d4d4" /></IconButton>
          <IconButton aria-label="Recent" $w={16}><Chevron s={6} c="#d4d4d4" /></IconButton>
          <IconButton aria-label="Up" $w={26}><Arrow s={12} dir={90} c="#6d6d6d" /></IconButton>
        </HistoryButtons>
        <AddressBox>
          <Crumbs>
            <PanelIcon />
            <IconButton aria-label="Expand" $w={21}><Chevron dir={-90} s={7} /></IconButton>
            <Crumb href="#" $w={72}>Control Panel</Crumb>
            <IconButton aria-label="Expand" $w={22}><Chevron dir={-90} s={7} /></IconButton>
            <Crumb href="#">All Control Panel Items</Crumb>
          </Crumbs>
          <IconButton aria-label="Previous locations" $w={30}><Chevron s={9} /></IconButton>
          <RefreshCell><IconButton aria-label="Refresh" $w={33}><SmallRefresh /></IconButton></RefreshCell>
        </AddressBox>
        <WindowSearch aria-label="Search Control Panel" />
      </AddressRow>
      <HeadingRow>
        <Heading>Adjust your computer's settings</Heading>
        <ViewBy>View by:<ViewSelect><option>Large icons</option></ViewSelect><Triangle c="#0a5fd8" /></ViewBy>
      </HeadingRow>
      <ItemGrid>
        {items.map(([icon, name], i) => (
          <ItemCell key={i}><ItemLink href="#"><ItemIcon name={icon} /><ItemLabel>{name}</ItemLabel></ItemLink></ItemCell>
        ))}
      </ItemGrid>
    </ControlWindow>
  );
}

function SoundDialog() {
  return (
    <Dialog role="dialog" aria-label="Sound">
      <DialogTitle><Cone s={15} /><DialogName>Sound</DialogName><IconButton aria-label="Close"><Cross s={11} c="#000" w={1} /></IconButton></DialogTitle>
      <DialogBody>
        <TabList role="tablist">
          <DialogTab role="tab" $w={59} $active>Playback</DialogTab>
          <DialogTab role="tab" $w={57}>Recording</DialogTab>
          <DialogTab role="tab" $w={47}>Sounds</DialogTab>
          <DialogTab role="tab" $w={87}>Communications</DialogTab>
        </TabList>
        <TabPanel role="tabpanel">
          <Prompt>Select a playback device below to modify its settings:</Prompt>
          <DeviceList>
            <Device>
              <SpeakerBox />
              <DeviceText><DeviceName>Speakers</DeviceName>Realtek High Definition Audio<br />Default Device</DeviceText>
              <Meter>{Array.from({ length: 10 }, (_, i) => <MeterBar key={i} />)}</Meter>
            </Device>
          </DeviceList>
          <ButtonRow>
            <PushButton disabled $start>Configure</PushButton>
            <SplitButton disabled><SplitLabel>Set Default</SplitLabel><IconButton as="span" $w={14}><Triangle c="#8f8f8f" s={10} /></IconButton></SplitButton>
            <PushButton disabled>Properties</PushButton>
          </ButtonRow>
        </TabPanel>
        <DialogFooter>
          <ButtonRow>
            <PushButton $primary>OK</PushButton>
            <PushButton>Cancel</PushButton>
            <PushButton disabled>Apply</PushButton>
          </ButtonRow>
        </DialogFooter>
      </DialogBody>
    </Dialog>
  );
}

function TaskbarPanel() {
  return (
    <Taskbar>
      <StartButton aria-label="Start"><StartLogo /></StartButton>
      <SearchBox><Lens /><SearchInput aria-label="Search" placeholder="Type here to search" /></SearchBox>
      <TaskButton aria-label="Cortana" $w={48}><svg width="16" height="16"><circle cx="8" cy="8" r="6.700" fill="none" stroke="#fff" strokeWidth="2" /></svg></TaskButton>
      <TaskButton aria-label="Task view" $w={50}><TaskView /></TaskButton>
      {tasks.map((t) => <TaskButton key={t.name} aria-label={t.name} $open={t.open} $current={t.current}>{t.icon}</TaskButton>)}
      <Tray>
        <Weather><WeatherIcon />88°F</Weather>
        <IconButton aria-label="Hidden icons" $w={28}><Chevron dir={180} s={12} c="#fff" w={1} /></IconButton>
        <IconButton aria-label="Network" $w={24}><Wifi /></IconButton>
        <IconButton aria-label="Volume" $w={22}><Volume /></IconButton>
        <IconButton aria-label="Battery" $w={24}><Battery /></IconButton>
        <Clock>3:32 PM<br />7/29/2021</Clock>
        <IconButton aria-label="Notifications" $w={30}><Notify /></IconButton>
        <ShowDesktop />
      </Tray>
    </Taskbar>
  );
}

export default function App() {
  return (
    <Desktop>
      <Global />
      <BrowserWindow />
      <ControlPanel />
      <SoundDialog />
      <TaskbarPanel />
    </Desktop>
  );
}
